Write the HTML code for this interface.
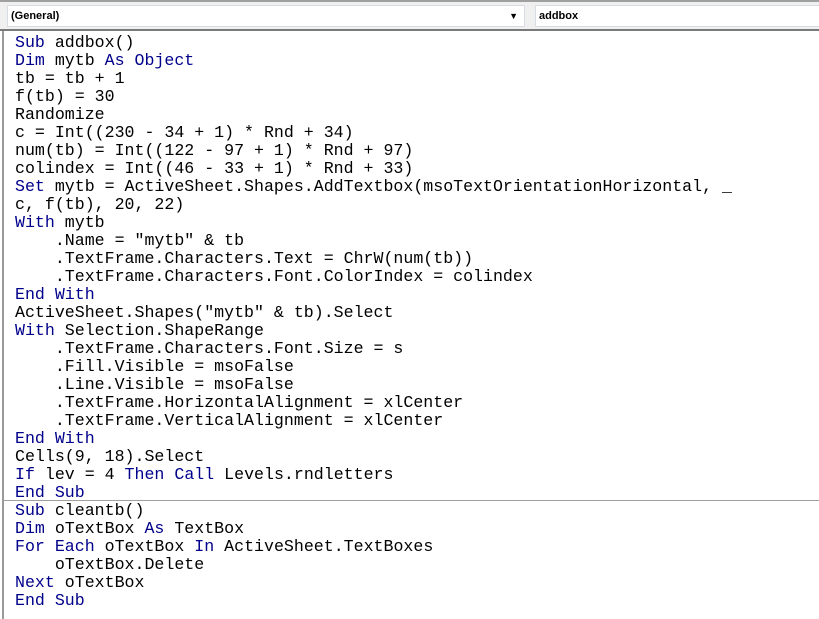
<!DOCTYPE html>
<html><head><style>
html,body{margin:0;padding:0;width:819px;height:619px;overflow:hidden;background:#fff;}
#hdr{position:absolute;left:0;top:0;width:819px;height:31px;background:#f0f0f0;border-top:2px solid #a0a0a0;box-sizing:border-box;border-bottom:2px solid #7a7a7a;}
.cb{position:absolute;top:3px;height:22px;background:#fff;border:1px solid #d8dce4;box-sizing:border-box;font:bold 11px "Liberation Sans",sans-serif;line-height:20px;padding-left:3px;color:#000;}
#code{position:absolute;left:2px;top:31px;width:817px;height:588px;border-left:2px solid #9a9a9a;box-sizing:border-box;}
pre{margin:0;position:absolute;left:11px;top:3px;font:16.6px/18px "Liberation Mono",monospace;color:#000;}
.k{color:#00008b;}
#sep{position:absolute;left:0;top:469px;width:817px;height:1px;background:#a0a0a0;}
</style></head><body>
<div id="hdr">
<div class="cb" style="left:7px;width:518px;">(General)<span style="position:absolute;right:6px;top:0;font-size:9px;">&#9660;</span></div>
<div class="cb" style="left:535px;width:290px;">addbox</div>
</div>
<div id="code"><div id="sep"></div>
<pre><span class="k">Sub</span> addbox()
<span class="k">Dim</span> mytb <span class="k">As</span> <span class="k">Object</span>
tb = tb + 1
f(tb) = 30
Randomize
c = Int((230 - 34 + 1) * Rnd + 34)
num(tb) = Int((122 - 97 + 1) * Rnd + 97)
colindex = Int((46 - 33 + 1) * Rnd + 33)
<span class="k">Set</span> mytb = ActiveSheet.Shapes.AddTextbox(msoTextOrientationHorizontal, _
c, f(tb), 20, 22)
<span class="k">With</span> mytb
    .Name = "mytb" &amp; tb
    .TextFrame.Characters.Text = ChrW(num(tb))
    .TextFrame.Characters.Font.ColorIndex = colindex
<span class="k">End</span> <span class="k">With</span>
ActiveSheet.Shapes("mytb" &amp; tb).Select
<span class="k">With</span> Selection.ShapeRange
    .TextFrame.Characters.Font.Size = s
    .Fill.Visible = msoFalse
    .Line.Visible = msoFalse
    .TextFrame.HorizontalAlignment = xlCenter
    .TextFrame.VerticalAlignment = xlCenter
<span class="k">End</span> <span class="k">With</span>
Cells(9, 18).Select
<span class="k">If</span> lev = 4 <span class="k">Then</span> <span class="k">Call</span> Levels.rndletters
<span class="k">End</span> <span class="k">Sub</span>
<span class="k">Sub</span> cleantb()
<span class="k">Dim</span> oTextBox <span class="k">As</span> TextBox
<span class="k">For</span> <span class="k">Each</span> oTextBox <span class="k">In</span> ActiveSheet.TextBoxes
    oTextBox.Delete
<span class="k">Next</span> oTextBox
<span class="k">End</span> <span class="k">Sub</span></pre>
</div>
</body></html>
